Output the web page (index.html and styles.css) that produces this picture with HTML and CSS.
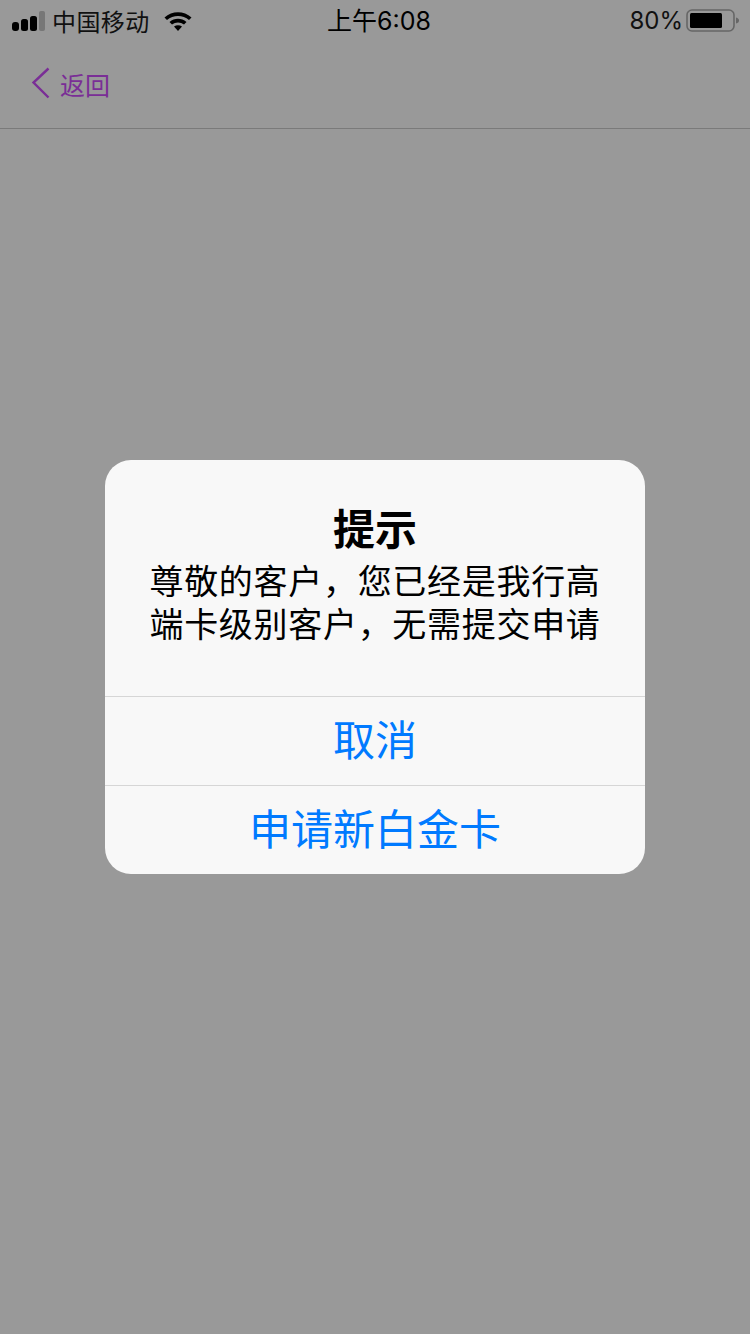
FILE: index.html
```html
<!DOCTYPE html>
<html lang="zh">
<head>
<meta charset="utf-8">
<title>提示</title>
<link rel="stylesheet" href="styles.css">
</head>
<body>
<div class="page">
  <header class="status">
    <div class="status-left">
      <svg class="signal" width="34" height="22" viewBox="0 0 34 22">
        <rect x="0" y="11" width="7" height="9" rx="3" fill="#000"/>
        <rect x="9" y="8" width="7" height="12" rx="2.500" fill="#000"/>
        <rect x="18" y="5" width="7" height="15" rx="2.500" fill="#000"/>
        <rect x="27" y="0" width="6" height="20" rx="2" fill="#777"/>
      </svg>
      <span class="carrier">中国移动</span>
      <svg class="wifi" width="30" height="22" viewBox="0 0 30 22">
        <path d="M1.500 7.500 C9 0.600 21 0.600 28.500 7.500 L26 10 C20 4.800 10 4.800 4 10 Z" fill="#000"/>
        <path d="M6.500 12 C11.500 7.700 18.500 7.700 23.500 12 L21 14.600 C17.500 11.800 12.500 11.800 9 14.600 Z" fill="#000"/>
        <path d="M11 16.500 C13.500 14.700 16.500 14.700 19 16.500 L15 21 Z" fill="#000"/>
      </svg>
    </div>
    <div class="clock">上午6:08</div>
    <div class="status-right">
      <span class="percent">80%</span>
      <svg class="battery" width="54" height="24" viewBox="0 0 54 24">
        <rect x="1" y="1" width="47" height="21" rx="5" fill="none" stroke="#666" stroke-width="1.600"/>
        <rect x="4" y="4" width="32" height="15" rx="1.500" fill="#000"/>
        <path d="M50 8.500 C52 9 53 10 53 11.500 C53 13 52 14 50 14.500 Z" fill="#666"/>
      </svg>
    </div>
  </header>
  <nav class="nav">
    <svg class="chevron" width="20" height="32" viewBox="0 0 20 32">
      <path d="M17.500 1.500 L2.500 15.500 L17.500 30.500" fill="none" stroke="#7a2e96" stroke-width="2.400"/>
    </svg>
    <span class="back">返回</span>
  </nav>
</div>
<div class="overlay">
  <div class="dialog">
    <div class="body">
      <h1 class="title">提示</h1>
      <p class="message">尊敬的客户，您已经是我行高<br>端卡级别客户，无需提交申请</p>
    </div>
    <div class="action">取消</div>
    <div class="action">申请新白金卡</div>
  </div>
</div>
</body>
</html>
```
FILE: styles.css
```css
html, body {
  margin: 0;
  padding: 0;
}
body {
  width: 750px;
  height: 1334px;
  background: #999999;
  font-family: "Noto Sans CJK SC", "Noto Sans", sans-serif;
  overflow: hidden;
  position: relative;
}
.page {
  display: flex;
  flex-direction: column;
}
.status {
  height: 40px;
  display: grid;
  grid-template-columns: 1fr auto 1fr;
  align-items: center;
  padding: 0 10px 0 12px;
  color: #000;
}
.status-left {
  display: flex;
  align-items: center;
}
.signal { margin-right: 6px; margin-top: 1px; }
.carrier {
  font-size: 24px;
  line-height: 40px;
  letter-spacing: 0.4px;
  color: #111;
}
.wifi { margin-left: 13px; margin-top: -1px; }
.clock {
  font-family: "Inter", "Noto Sans CJK SC", sans-serif;
  font-size: 25px;
  line-height: 42px;
  margin-left: 6px;
}
.status-right {
  display: flex;
  justify-content: flex-end;
  align-items: center;
}
.percent {
  font-family: "Inter", "Noto Sans", sans-serif;
  font-size: 24px;
  line-height: 42px;
  color: #111;
  margin-right: 3px;
}
.nav {
  height: 89px;
  box-sizing: border-box;
  display: flex;
  align-items: center;
  padding-left: 31px;
  border-bottom: 1px solid #7a7a7a;
}
.chevron { margin-right: 9px; margin-top: -2px; }
.back {
  font-size: 25px;
  color: #7a2e96;
  line-height: 32px;
}
.overlay {
  position: absolute;
  left: 105px;
  top: 460px;
}
.dialog {
  width: 540px;
  height: 414px;
  background: #f8f8f8;
  border-radius: 26px;
  display: flex;
  flex-direction: column;
  overflow: hidden;
}
.body {
  height: 236px;
  box-sizing: border-box;
  padding-top: 43px;
  text-align: center;
}
.title {
  margin: 0;
  font-size: 42px;
  line-height: 48px;
  font-weight: 700;
  color: #000;
}
.message {
  margin: 7px 0 0;
  font-size: 34px;
  line-height: 43px;
  letter-spacing: 0.7px;
  color: #000;
}
.action {
  height: 89px;
  box-sizing: border-box;
  border-top: 1px solid #d6d6d6;
  padding-bottom: 8px;
  display: flex;
  align-items: center;
  justify-content: center;
  font-size: 42px;
  color: #007aff;
}
```
